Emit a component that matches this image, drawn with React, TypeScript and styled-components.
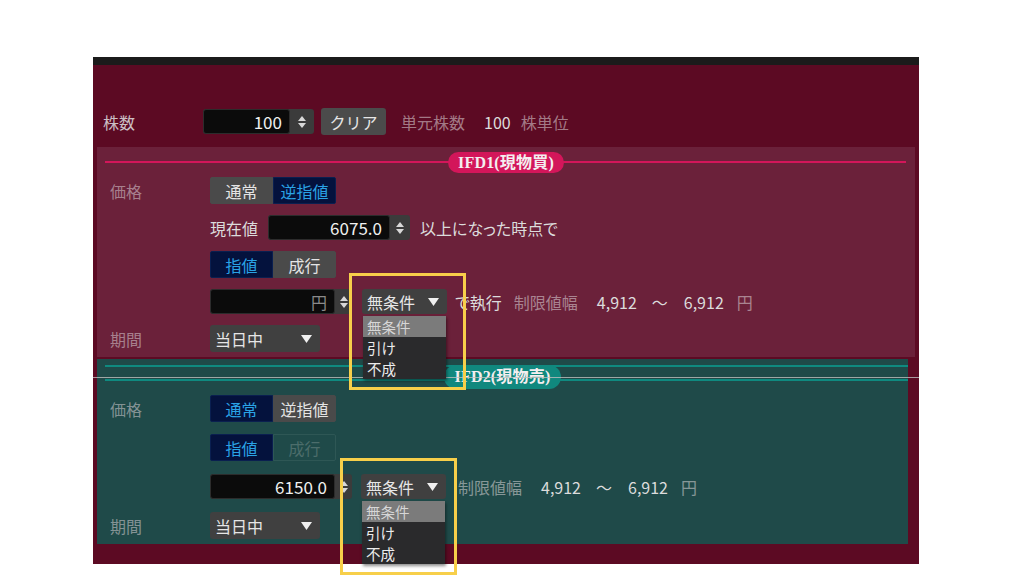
import React from 'react'
import styled, { createGlobalStyle } from 'styled-components'

const GlobalStyle = createGlobalStyle`
  html, body {
    margin: 0;
    padding: 0;
    background: #ffffff;
  }
  body {
    font-family: "Noto Sans CJK JP", "Noto Sans", sans-serif;
    font-size: 16px;
    color: #e2e2e2;
  }
`

const Page = styled.div`
  width: 1024px;
  height: 576px;
  padding: 57px 0 0 93px;
  box-sizing: border-box;
  overflow: hidden;
`

const Frame = styled.div`
  position: relative;
  width: 826px;
  background: #5c0a23;
  border-top: 8px solid #1b1b1b;
  padding: 0 0 20px;
  display: flex;
  flex-direction: column;
`

const TopRow = styled.div`
  display: flex;
  align-items: center;
  height: 27px;
  margin: 43px 0 12px;
  padding-left: 10px;
`

const Label = styled.div<{ $muted?: boolean }>`
  width: 100px;
  flex-shrink: 0;
  color: ${p => (p.$muted ? 'rgba(220, 210, 215, 0.55)' : '#cbbfc4')};
`

const Text = styled.span<{ $ml?: number; $mr?: number; $muted?: boolean }>`
  margin-left: ${p => p.$ml ?? 0}px;
  margin-right: ${p => p.$mr ?? 0}px;
  color: ${p => (p.$muted ? 'rgba(225, 220, 222, 0.55)' : '#dcdcdc')};
  white-space: nowrap;
  font-feature-settings: "palt";
`

const Panel = styled.div<{ $bg: string; $mr: number; $mt: number }>`
  background: ${p => p.$bg};
  margin: ${p => p.$mt}px ${p => p.$mr}px 0 4px;
  padding: 0 0 5px 13px;
  display: flex;
  flex-direction: column;
`

const Rows = styled.div<{ $gap: number }>`
  display: flex;
  flex-direction: column;
  gap: ${p => p.$gap}px;
`

const Header = styled.div<{ $h: number }>`
  position: relative;
  height: ${p => p.$h}px;
  margin-left: -5px;
  display: flex;
  align-items: center;
  justify-content: center;
`

const HeaderLine = styled.div<{ $color: string; $top: number; $right: number }>`
  position: absolute;
  left: 0;
  right: ${p => p.$right}px;
  top: ${p => p.$top}px;
  height: 2px;
  background: ${p => p.$color};
`

const Badge = styled.div<{ $color: string; $h: number }>`
  position: relative;
  margin-left: -8px;
  height: ${p => p.$h}px;
  padding: 0 10px;
  border-radius: ${p => p.$h / 2}px;
  background: ${p => p.$color};
  color: #f4eef0;
  font-family: "Liberation Serif", "Noto Sans CJK JP", serif;
  font-weight: bold;
  font-size: 16px;
  line-height: ${p => p.$h}px;
  letter-spacing: 0.2px;
`

const Row = styled.div`
  display: flex;
  align-items: center;
  height: 27px;
`

const Indent = styled.div`
  width: 100px;
  flex-shrink: 0;
`

const Toggle = styled.div`
  display: flex;
  height: 27px;
`

const Seg = styled.div<{ $active?: boolean; $disabled?: boolean }>`
  width: 63px;
  height: 27px;
  box-sizing: border-box;
  display: flex;
  align-items: center;
  justify-content: center;
  background: ${p => (p.$active ? '#04123d' : p.$disabled ? 'transparent' : '#4a4a4a')};
  color: ${p => (p.$active ? '#2aa3e6' : p.$disabled ? '#4c6d6b' : '#e4e4e4')};
  border: 1px solid ${p => (p.$active ? '#0a1f50' : p.$disabled ? '#2e5755' : '#4a4a4a')};
  &:first-child {
    border-radius: 2px 0 0 2px;
  }
  &:last-child {
    border-radius: 0 2px 2px 0;
  }
`

const Spin = styled.div`
  display: flex;
  align-items: stretch;
  height: 25px;
  background: #3b3b3b;
  border-radius: 3px;
`

const Field = styled.div<{ $w: number }>`
  width: ${p => p.$w}px;
  box-sizing: border-box;
  background: #0b0b0b;
  border: 1px solid #2c2c2c;
  border-radius: 3px;
  padding: 0 7px;
  display: flex;
  align-items: center;
  justify-content: flex-end;
  color: #f0f0f0;
  font-size: 17px;
`

const FieldUnit = styled.span`
  color: #8a8a8a;
  font-size: 16px;
`

const Arrows = styled.div<{ $w: number }>`
  width: ${p => p.$w}px;
  display: flex;
  flex-direction: column;
  align-items: center;
  justify-content: center;
  gap: 2px;
`

const ClearButton = styled.div`
  margin-left: 7px;
  width: 65px;
  height: 27px;
  border-radius: 3px;
  background: #4b4b4b;
  color: #e6e6e6;
  display: flex;
  align-items: center;
  justify-content: center;
`

const SelectWrap = styled.div<{ $ml: number }>`
  position: relative;
  margin-left: ${p => p.$ml}px;
`

const Select = styled.div<{ $w: number; $h: number }>`
  width: ${p => p.$w}px;
  height: ${p => p.$h}px;
  box-sizing: border-box;
  background: #404040;
  border-radius: 3px;
  padding: 0 8px 0 5px;
  display: flex;
  align-items: center;
  justify-content: space-between;
  color: #e6e6e6;
`

const Menu = styled.div`
  position: absolute;
  z-index: 3;
  left: 1px;
  top: 27px;
  width: 83px;
  background: #2a2a2c;
  box-shadow: 1px 2px 3px rgba(0, 0, 0, 0.45);
  display: flex;
  flex-direction: column;
`

const MenuItem = styled.div<{ $selected?: boolean }>`
  height: 21px;
  line-height: 21px;
  padding-left: 4px;
  font-size: 14.5px;
  background: ${p => (p.$selected ? '#7b7b7b' : 'transparent')};
  color: ${p => (p.$selected ? '#d6d6d6' : '#ececec')};
`

const Highlight = styled.div<{ $left: number }>`
  position: absolute;
  z-index: 4;
  left: ${p => p.$left}px;
  top: -16px;
  width: 117px;
  height: 117px;
  box-sizing: border-box;
  border: 3px solid #f7cf4a;
  pointer-events: none;
`

const Seam = styled.div`
  position: absolute;
  z-index: 2;
  left: 0;
  right: 0;
  top: 312px;
  height: 1px;
  background: rgba(190, 190, 190, 0.8);
`

const SpinArrows: React.FC<{ w: number }> = ({ w }) => (
  <Arrows $w={w}>
    <svg width="8" height="5" viewBox="0 0 8 5">
      <path d="M4 0 L8 5 L0 5 Z" fill="#d8d8d8" />
    </svg>
    <svg width="8" height="5" viewBox="0 0 8 5">
      <path d="M0 0 L8 0 L4 5 Z" fill="#d8d8d8" />
    </svg>
  </Arrows>
)

const Caret = () => (
  <svg width="11" height="8" viewBox="0 0 11 8">
    <path d="M0 0 L11 0 L5.5 8 Z" fill="#f0f0f0" />
  </svg>
)

const SpinInput: React.FC<{ w: number; aw: number; value?: string; unit?: string }> = ({
  w,
  aw,
  value,
  unit,
}) => (
  <Spin>
    <Field $w={w}>
      {value}
      {unit && <FieldUnit>{unit}</FieldUnit>}
    </Field>
    <SpinArrows w={aw} />
  </Spin>
)

const ConditionSelect: React.FC<{ ml: number; hl: number }> = ({ ml, hl }) => (
  <SelectWrap $ml={ml}>
    <Select $w={85} $h={25}>
      無条件
      <Caret />
    </Select>
    <Menu>
      <MenuItem $selected>無条件</MenuItem>
      <MenuItem>引け</MenuItem>
      <MenuItem>不成</MenuItem>
    </Menu>
    <Highlight $left={hl} />
  </SelectWrap>
)

const TermRow = () => (
  <Row>
    <Label $muted>期間</Label>
    <Select $w={110} $h={27}>
      当日中
      <Caret />
    </Select>
  </Row>
)

const LimitRange: React.FC<{ ml: number }> = ({ ml }) => (
  <>
    <Text $ml={ml} $muted>制限値幅</Text>
    <Text $ml={19}>4,912</Text>
    <Text $ml={15}>〜</Text>
    <Text $ml={16}>6,912</Text>
    <Text $ml={13} $muted>円</Text>
  </>
)

export default function App() {
  return (
    <Page>
      <GlobalStyle />
      <Frame>
        <TopRow>
          <Label>株数</Label>
          <SpinInput w={87} aw={24} value="100" />
          <ClearButton>クリア</ClearButton>
          <Text $ml={15} $muted>単元株数</Text>
          <Text $ml={19}>100</Text>
          <Text $ml={10} $muted>株単位</Text>
        </TopRow>

        <Panel $bg="#6b213a" $mr={4} $mt={0}>
          <Header $h={30}>
            <HeaderLine $color="#d3165a" $top={14} $right={9} />
            <Badge $color="#d3165a" $h={21}>IFD1(現物買)</Badge>
          </Header>
          <Rows $gap={10}>
            <Row>
              <Label $muted>価格</Label>
              <Toggle>
                <Seg>通常</Seg>
                <Seg $active>逆指値</Seg>
              </Toggle>
            </Row>
            <Row>
              <Indent />
              <Text $mr={10}>現在値</Text>
              <SpinInput w={122} aw={20} value="6075.0" />
              <Text $ml={10}>以上になった時点で</Text>
            </Row>
            <Row>
              <Indent />
              <Toggle>
                <Seg $active>指値</Seg>
                <Seg>成行</Seg>
              </Toggle>
            </Row>
            <Row>
              <Indent />
              <SpinInput w={125} aw={17} unit="円" />
              <ConditionSelect ml={10} hl={-13} />
              <Text $ml={8}>で執行</Text>
              <LimitRange ml={12} />
            </Row>
            <TermRow />
          </Rows>
        </Panel>

        <Panel $bg="#1f4a49" $mr={11} $mt={2}>
          <Header $h={36}>
            <HeaderLine $color="#0f8a80" $top={6} $right={0} />
            <HeaderLine $color="#0f8a80" $top={20} $right={0} />
            <Badge $color="#10887e" $h={24}>IFD2(現物売)</Badge>
          </Header>
          <Rows $gap={12}>
            <Row>
              <Label $muted>価格</Label>
              <Toggle>
                <Seg $active>通常</Seg>
                <Seg>逆指値</Seg>
              </Toggle>
            </Row>
            <Row>
              <Indent />
              <Toggle>
                <Seg $active>指値</Seg>
                <Seg $disabled>成行</Seg>
              </Toggle>
            </Row>
            <Row>
              <Indent />
              <SpinInput w={125} aw={17} value="6150.0" />
              <ConditionSelect ml={9} hl={-21} />
              <LimitRange ml={12} />
            </Row>
            <TermRow />
          </Rows>
        </Panel>
        <Seam />
      </Frame>
    </Page>
  )
}
